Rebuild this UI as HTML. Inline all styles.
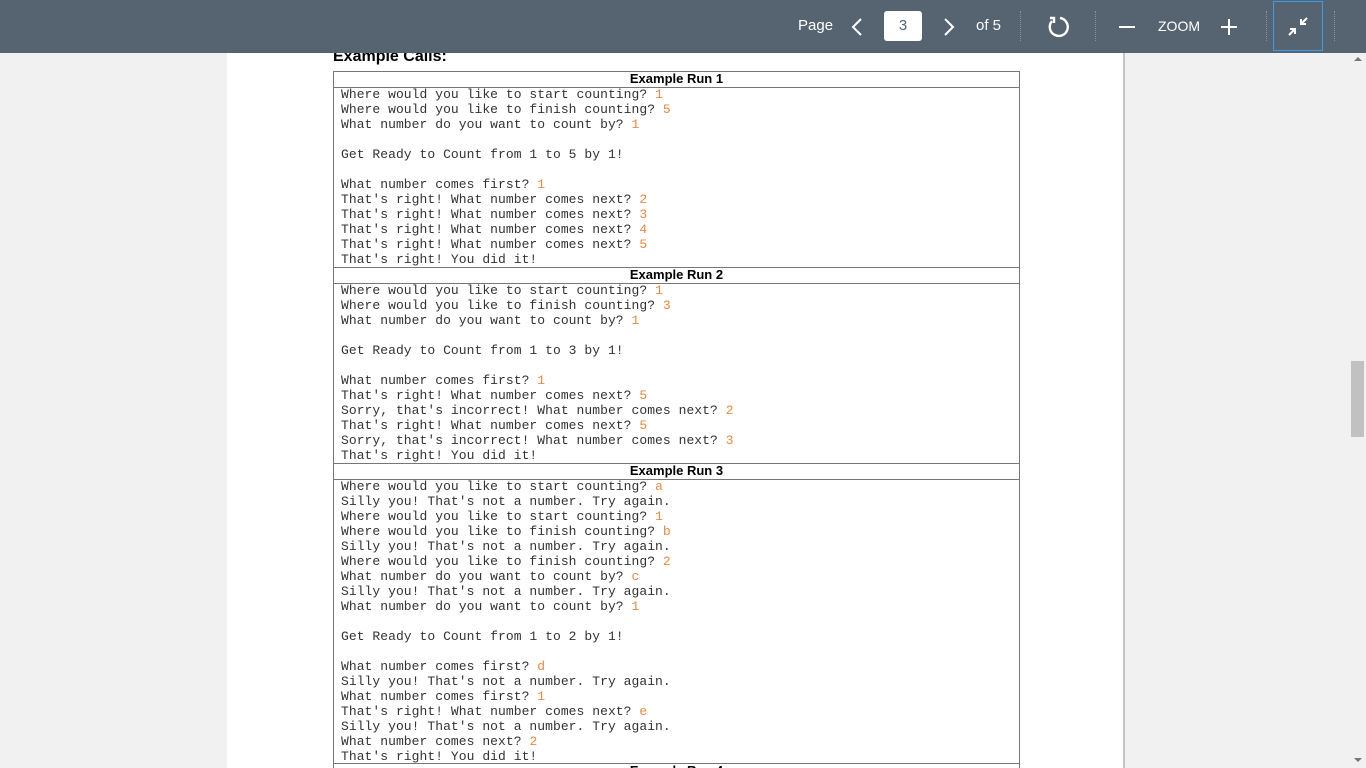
<!DOCTYPE html>
<html><head><meta charset="utf-8"><style>
*{margin:0;padding:0;box-sizing:border-box}
html{overflow:hidden;height:768px}
body{width:1366px;height:768px;overflow:hidden;background:#f1f1f1;position:relative;font-family:"Liberation Sans",sans-serif}
#bar{position:absolute;left:0;top:0;width:1366px;height:53px;background:#566472;color:#fff}
.t{position:absolute;top:17px;font-size:15px}
.sep{position:absolute;top:11px;height:30px;border-left:1px dotted #8795a2}
#page{position:absolute;left:227px;top:53px;width:898px;height:715px;background:#fff;border-right:2px solid #c4c4c4}
h3{position:absolute;left:333px;top:48px;font-size:16px;font-weight:bold;color:#000}
#tbl{position:absolute;left:333px;top:71px;width:687px;height:700px;border-left:1px solid #777;border-right:1px solid #777}
.h{position:absolute;left:-1px;width:687px;height:17px;border-top:1px solid #777;border-bottom:1px solid #777;font-size:13px;font-weight:bold;line-height:14px;text-align:center}
.b{position:absolute;left:7px;font-family:"Liberation Mono",monospace;font-size:13px;letter-spacing:0.05px;line-height:15px;white-space:pre;color:#333}
.o{color:#f0883e}
#thumb{position:absolute;left:1351px;top:361px;width:13px;height:76px;background:#c1c1c1}
</style></head><body>
<div id="page"></div>
<h3>Example Calls:</h3>
<div id="tbl">
<div class="h" style="top:0">Example Run 1</div>
<div class="b" style="top:16px">Where would you like to start counting? <span class="o">1</span>
Where would you like to finish counting? <span class="o">5</span>
What number do you want to count by? <span class="o">1</span>

Get Ready to Count from 1 to 5 by 1!

What number comes first? <span class="o">1</span>
That's right! What number comes next? <span class="o">2</span>
That's right! What number comes next? <span class="o">3</span>
That's right! What number comes next? <span class="o">4</span>
That's right! What number comes next? <span class="o">5</span>
That's right! You did it!</div>
<div class="h" style="top:196px">Example Run 2</div>
<div class="b" style="top:212px">Where would you like to start counting? <span class="o">1</span>
Where would you like to finish counting? <span class="o">3</span>
What number do you want to count by? <span class="o">1</span>

Get Ready to Count from 1 to 3 by 1!

What number comes first? <span class="o">1</span>
That's right! What number comes next? <span class="o">5</span>
Sorry, that's incorrect! What number comes next? <span class="o">2</span>
That's right! What number comes next? <span class="o">5</span>
Sorry, that's incorrect! What number comes next? <span class="o">3</span>
That's right! You did it!</div>
<div class="h" style="top:392px">Example Run 3</div>
<div class="b" style="top:408px">Where would you like to start counting? <span class="o">a</span>
Silly you! That's not a number. Try again.
Where would you like to start counting? <span class="o">1</span>
Where would you like to finish counting? <span class="o">b</span>
Silly you! That's not a number. Try again.
Where would you like to finish counting? <span class="o">2</span>
What number do you want to count by? <span class="o">c</span>
Silly you! That's not a number. Try again.
What number do you want to count by? <span class="o">1</span>

Get Ready to Count from 1 to 2 by 1!

What number comes first? <span class="o">d</span>
Silly you! That's not a number. Try again.
What number comes first? <span class="o">1</span>
That's right! What number comes next? <span class="o">e</span>
Silly you! That's not a number. Try again.
What number comes next? <span class="o">2</span>
That's right! You did it!</div>
<div class="h" style="top:692px">Example Run 4</div>
</div>
<div id="bar">
<span class="t" style="left:798px">Page</span>
<svg style="position:absolute;left:850px;top:17px" width="14" height="20"><path d="M11 2 L3 10 L11 18" stroke="#fff" stroke-width="2" fill="none"/></svg>
<div style="position:absolute;left:884px;top:11px;width:38px;height:30px;background:#fff;border-radius:3px;color:#566472;font-size:15px;text-align:center;line-height:30px">3</div>
<svg style="position:absolute;left:942px;top:17px" width="14" height="20"><path d="M3 2 L11 10 L3 18" stroke="#fff" stroke-width="2" fill="none"/></svg>
<span class="t" style="left:976px">of 5</span>
<div class="sep" style="left:1020px"></div>
<svg style="position:absolute;left:1046px;top:14px" width="26" height="26"><path d="M6 7 A9 9 0 1 0 14 4" stroke="#fff" stroke-width="2.4" fill="none"/><path d="M4 4 L8 4 L8 9" stroke="#fff" stroke-width="2.4" fill="none"/></svg>
<div class="sep" style="left:1095px"></div>
<div style="position:absolute;left:1119px;top:26px;width:16px;height:2px;background:#fff"></div>
<span class="t" style="left:1158px;font-size:14px;top:18px">ZOOM</span>
<div style="position:absolute;left:1221px;top:26px;width:16px;height:2px;background:#fff"></div>
<div style="position:absolute;left:1228px;top:19px;width:2px;height:16px;background:#fff"></div>
<div class="sep" style="left:1266px"></div>
<div style="position:absolute;left:1273px;top:1px;width:50px;height:50px;border:1px solid #3d9be9"></div>
<svg style="position:absolute;left:1285px;top:14px" width="26" height="26"><path d="M4 21 L10 15 M5 15 L10 15 L10 20 M22 4 L16 10 M16 5 L16 10 L21 10" stroke="#fff" stroke-width="2" fill="none"/></svg>
<div class="sep" style="left:1334px"></div>
</div>
<svg style="position:absolute;left:1353px;top:56px" width="10" height="6"><path d="M1 5 L5 1 L9 5Z" fill="#777"/></svg>
<svg style="position:absolute;left:1353px;top:757px" width="10" height="6"><path d="M1 1 L5 5 L9 1Z" fill="#777"/></svg>
<div id="thumb"></div>
</body></html>
